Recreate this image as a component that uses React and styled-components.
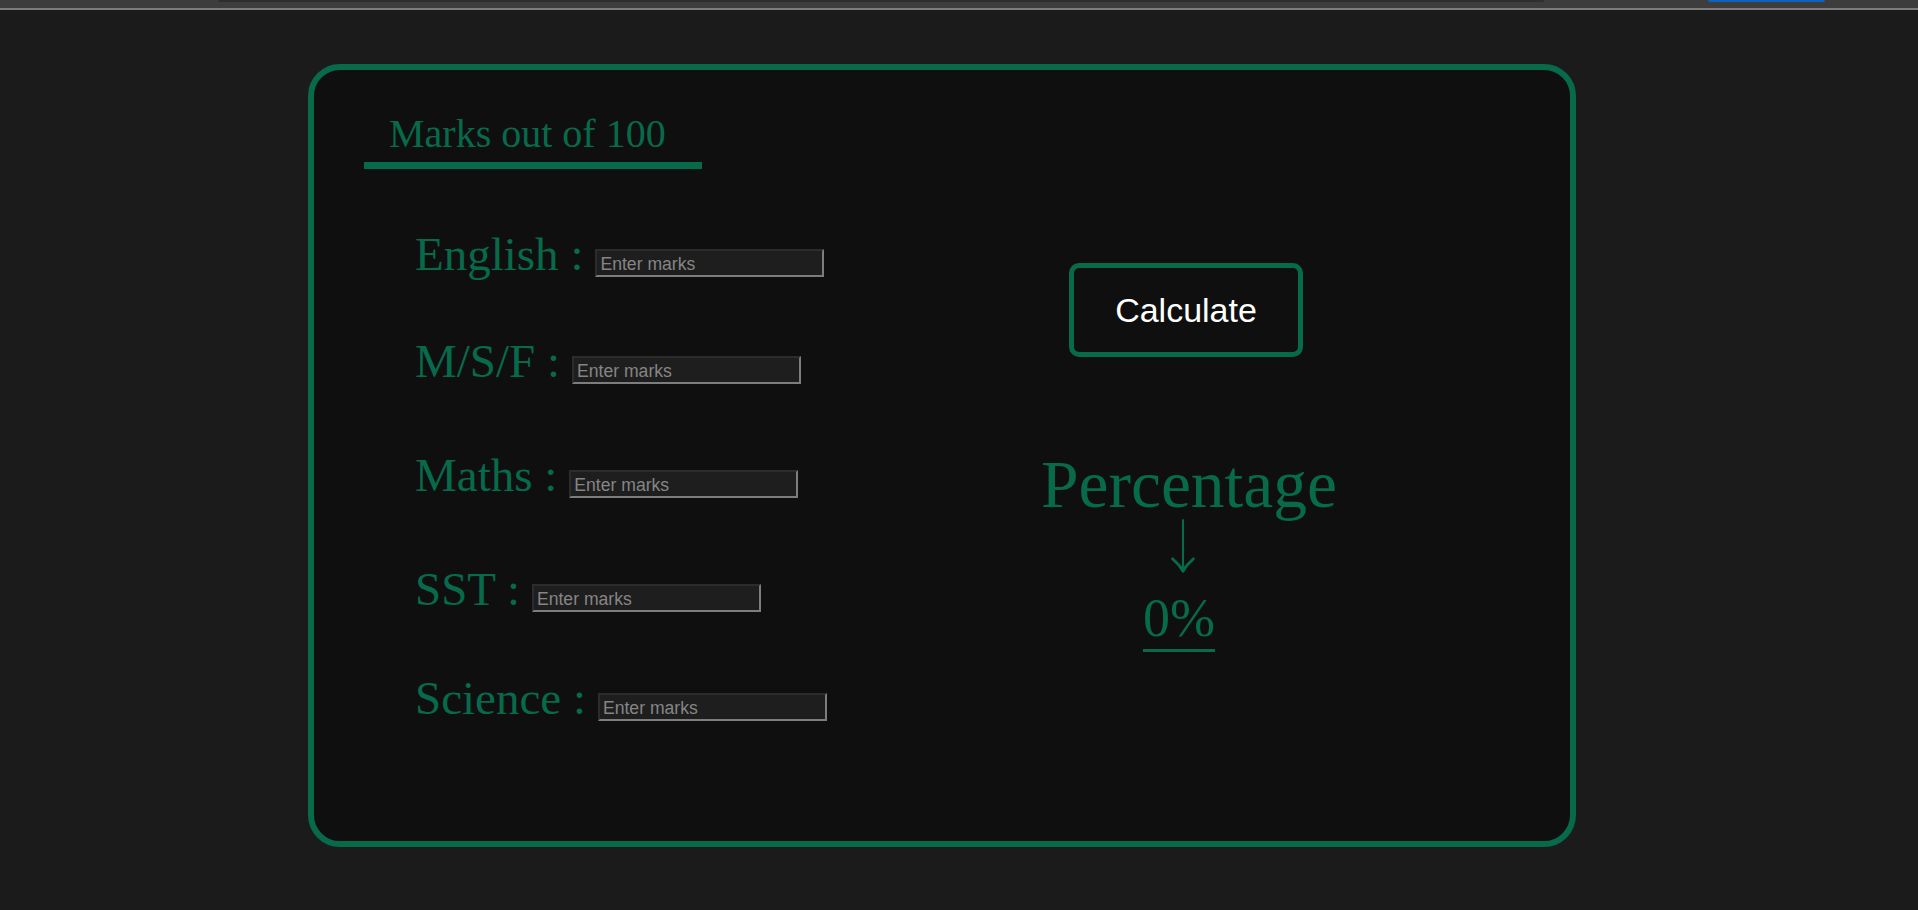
import React from "react";
import styled, { createGlobalStyle } from "styled-components";

const GREEN = "#076a4b";

const Global = createGlobalStyle`
  html, body { margin: 0; padding: 0; }
  body {
    background: #1b1b1b;
    font-family: "Liberation Serif", "Times New Roman", serif;
    min-height: 910px;
  }
  * { box-sizing: border-box; }
`;

const ChromeStrip = styled.div`
  position: relative;
  height: 10px;
  background: #3d3d3d;
  border-bottom: 2px solid #7d7d7d;
`;

const StripBar = styled.div`
  position: absolute;
  top: 0;
  left: ${(p) => p.$left}px;
  width: ${(p) => p.$width}px;
  height: 2px;
  border-radius: 0 0 6px 6px;
  background: ${(p) => p.$color};
`;

const Page = styled.div`
  padding: 54px 0 0 308px;
`;

const Card = styled.section`
  width: 1268px;
  height: 783px;
  border: 6px solid ${GREEN};
  border-radius: 32px;
  background: #0f0f0f;
  padding: 44px 50px 0;
  display: flex;
  flex-direction: column;
  align-items: flex-start;
`;

const Title = styled.h2`
  margin: 0;
  width: 338px;
  padding: 0 0 8px 25px;
  font-family: "Liberation Serif", "Times New Roman", serif;
  font-weight: normal;
  font-size: 40px;
  line-height: 40px;
  color: ${GREEN};
  border-bottom: 7px solid ${GREEN};
`;

const Body = styled.div`
  display: flex;
  align-items: flex-start;
  width: 100%;
`;

const LeftCol = styled.div`
  margin-left: 51px;
  width: 571px;
  display: flex;
  flex-direction: column;
`;

const Row = styled.div`
  display: flex;
  align-items: baseline;
  gap: 12px;
  margin-top: ${(p) => p.$mt}px;
`;

const Label = styled.label`
  font-family: "Liberation Serif", "Times New Roman", serif;
  font-size: 47px;
  line-height: 47px;
  color: ${GREEN};
  white-space: nowrap;
`;

const MarkInput = styled.input`
  width: 229px;
  height: 28px;
  padding: 3px 2px 0 3px;
  background: #1e1e1e;
  color: #cfcfcf;
  font-family: "Liberation Sans", Arial, sans-serif;
  font-size: 17.6px;
  border-style: solid;
  border-width: 2px;
  border-color: #2c2c2c #7d7d7d #7d7d7d #2c2c2c;
  outline: none;
  &::placeholder {
    color: #858585;
  }
`;

const RightCol = styled.div`
  width: 400px;
  padding-top: 94px;
  display: flex;
  flex-direction: column;
  align-items: center;
`;

const CalcButton = styled.button`
  width: 234px;
  height: 94px;
  border: 5px solid ${GREEN};
  border-radius: 10px;
  background: transparent;
  color: #ffffff;
  font-family: "Liberation Sans", Arial, sans-serif;
  font-size: 34px;
  cursor: pointer;
  padding: 0;
`;

const Percentage = styled.div`
  margin: 94px 0 0 6px;
  font-size: 67.5px;
  line-height: 67px;
  color: ${GREEN};
`;

const ArrowIcon = styled.svg`
  display: block;
  margin-right: 6px;
  width: 24px;
  height: 55px;
`;

const Result = styled.div`
  margin: 14px 14px 0 0;
  font-size: 54px;
  line-height: 62px;
  color: ${GREEN};
  border-bottom: 3px solid ${GREEN};
`;

const subjects = [
  { name: "English", mt: 62 },
  { name: "M/S/F", mt: 60 },
  { name: "Maths", mt: 67 },
  { name: "SST", mt: 67 },
  { name: "Science", mt: 62 },
];

function DownArrow() {
  return (
    <ArrowIcon viewBox="0 0 24 55" aria-hidden="true">
      <path d="M12 1.3 V51" stroke={GREEN} strokeWidth="2.1" fill="none" />
      <path
        d="M1.6 40.8 Q8 46 12 53.2 Q16 46 22.4 40.8"
        stroke={GREEN}
        strokeWidth="2.8"
        fill="none"
        strokeLinejoin="round"
        strokeLinecap="round"
      />
      <path d="M7.8 46.8 L12 54 L16.2 46.8 Q12 49.8 7.8 46.8 Z" fill={GREEN} />
    </ArrowIcon>
  );
}

export default function App() {
  const [marks, setMarks] = React.useState({});
  const [pct, setPct] = React.useState(0);

  const calc = () => {
    const total = subjects.reduce(
      (s, sub) => s + (parseFloat(marks[sub.name]) || 0),
      0
    );
    setPct(Math.round((total / 500) * 100 * 100) / 100);
  };

  return (
    <>
      <Global />
      <ChromeStrip>
        <StripBar $left={218} $width={1326} $color="#2e2e2e" />
        <StripBar $left={1708} $width={117} $color="#0b63c4" />
      </ChromeStrip>
      <Page>
        <Card>
          <Title>Marks out of 100</Title>
          <Body>
            <LeftCol>
              {subjects.map((s) => (
                <Row key={s.name} $mt={s.mt}>
                  <Label>{s.name} :</Label>
                  <MarkInput
                    type="text"
                    placeholder="Enter marks"
                    value={marks[s.name] || ""}
                    onChange={(e) =>
                      setMarks({ ...marks, [s.name]: e.target.value })
                    }
                  />
                </Row>
              ))}
            </LeftCol>
            <RightCol>
              <CalcButton onClick={calc}>Calculate</CalcButton>
              <Percentage>Percentage</Percentage>
              <DownArrow />
              <Result>{pct}%</Result>
            </RightCol>
          </Body>
        </Card>
      </Page>
    </>
  );
}
